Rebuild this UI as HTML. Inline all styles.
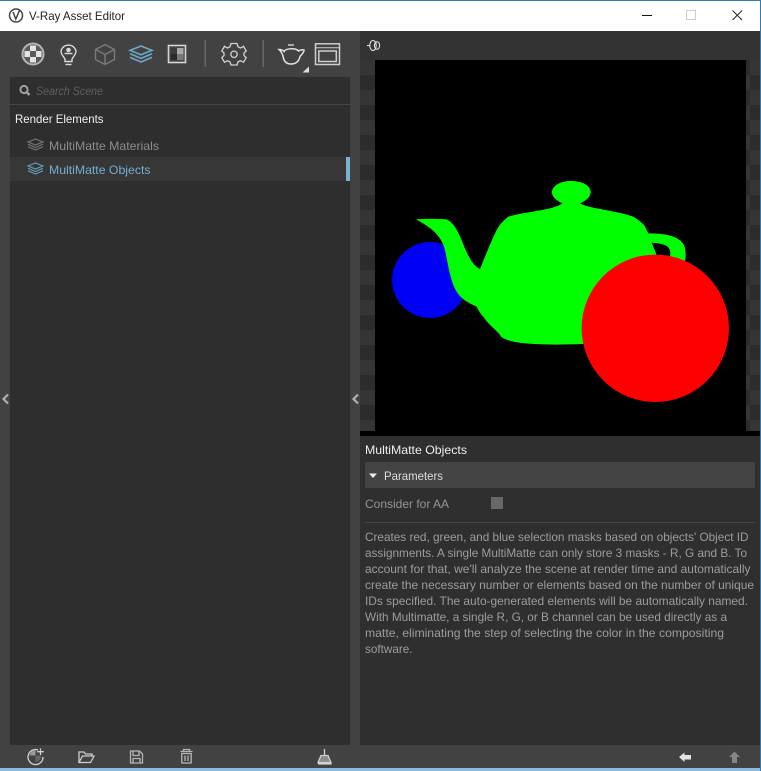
<!DOCTYPE html>
<html><head><meta charset="utf-8"><title>V-Ray Asset Editor</title>
<style>
html,body{margin:0;padding:0;width:761px;height:771px;overflow:hidden;background:#424242}
svg{display:block}
text{font-family:"Liberation Sans",sans-serif;font-size:12px}
</style></head><body>
<svg width="761" height="771" viewBox="0 0 761 771" xmlns="http://www.w3.org/2000/svg">
<defs>
<pattern id="chk" x="360" y="60" width="30" height="30" patternUnits="userSpaceOnUse">
<rect width="30" height="30" fill="#353535"/>
<rect x="0" y="15" width="15" height="15" fill="#2c2c2c"/>
<rect x="15" y="0" width="15" height="15" fill="#2c2c2c"/>
</pattern>
<g id="layers" fill="none" stroke-width="1.1">
<path d="M0-5.5 7.5-2.5 0 .5-7.5-2.5Z"/>
<path d="M-7.5-.2 0 3 7.5-.2"/>
<path d="M-7.5 2.3 0 5.5 7.5 2.3"/>
</g>
</defs>

<!-- base -->
<rect width="761" height="771" fill="#424242"/>
<!-- title bar -->
<rect width="761" height="31" fill="#fff"/>
<rect width="761" height="1" fill="#2b7cba"/>
<circle cx="16" cy="15.500" r="6.500" fill="none" stroke="#444" stroke-width="1.500"/>
<path d="M13 12 15.800 19 19.500 10.500" fill="none" stroke="#444" stroke-width="1.500"/>
<text x="29" y="20" fill="#222" textLength="96" lengthAdjust="spacingAndGlyphs">V-Ray Asset Editor</text>
<rect x="642" y="15" width="10" height="1" fill="#111"/>
<rect x="686.500" y="10.500" width="9" height="9" fill="none" stroke="#ccc"/>
<path d="M732.500 10.500 742 20M742 10.500 732.500 20" stroke="#222" stroke-width="1" fill="none"/>

<!-- top toolbar icons -->
<!-- material ball -->
<g>
<circle cx="33" cy="54" r="10.500" fill="#5a5a5a" stroke="#b4b4b4" stroke-width="2"/>
<path d="M30 45.500h6v5.500h-6zM30 57h6v5.500h-6zM24.500 51h5.500v6h-5.500zM36 51h5.500v6h-5.500z" fill="#e4e4e4"/>
</g>
<!-- bulb -->
<g fill="none" stroke="#d8d8d8" stroke-width="1.400">
<path d="M65 61.500V59.500C65 57.500 61 55.500 61 51A7.700 7.700 0 0 1 76 51C76 55.500 72 57.500 72 59.500V61.500Z"/>
<path d="M65.500 64.500H71.500"/>
<path d="M64.500 53.500H72.500"/>
<circle cx="68.500" cy="50" r="1.600" fill="#d8d8d8"/>
</g>
<!-- cube -->
<g fill="none" stroke="#7b7b7b" stroke-width="1.400">
<path d="M105 44.500 114.500 49.500V59.500L105 64.500 95.500 59.500V49.500Z"/>
<path d="M95.500 49.500 105 54.500 114.500 49.500M105 54.500V64.500"/>
</g>
<!-- layers active -->
<g transform="translate(141 54) scale(1.450)" stroke="#6fa9c8"><use href="#layers"/></g>
<!-- texture square -->
<rect x="168.500" y="45.500" width="17" height="17" fill="#444" stroke="#d6d6d6" stroke-width="1.600"/>
<rect x="171" y="54" width="6" height="6" fill="#2a2a2a"/>
<rect x="171" y="48" width="6" height="6" fill="#3c3c3c"/>
<rect x="177" y="48" width="6.500" height="6" fill="#aaa"/>
<rect x="177" y="54" width="6.500" height="6" fill="#7a7a7a"/>
<!-- separators -->
<rect x="204.500" y="40" width="1.500" height="27" fill="#676767"/>
<rect x="262.500" y="40" width="1.500" height="27" fill="#676767"/>
<!-- gear -->
<g fill="none" stroke="#d2d2d2" stroke-width="1.300">
<path d="M231 43.500H237L238 46.800 240.600 48 243.500 46.300 246.200 51 244 53 244 55.600 246.200 57.600 243.500 62.300 240.600 60.700 238 61.900 237 65H231L230 61.900 227.400 60.700 224.500 62.300 221.800 57.600 224 55.600 224 53 221.800 51 224.500 46.300 227.400 48 230 46.800Z"/>
<circle cx="234" cy="54.300" r="3.200"/>
</g>
<!-- teapot icon -->
<g fill="none" stroke="#e2e2e2" stroke-width="1.500">
<path d="M279 49.500C281 49.500 283 50.500 284 51.500 286 48 296 48 298.500 51 300 50 302 49.500 304 50 304 53 301 55 300 56.500 299 61 296 64 291 64 285.500 64 283.500 60 283 56 282 53 280.500 51 279 49.500Z"/>
<path d="M288 45H294" stroke-width="1.300"/>
</g>
<path d="M309 66.500V72.500H302.500Z" fill="#ddd"/>
<!-- window icon -->
<g fill="none" stroke="#cfcfcf" stroke-width="1.500">
<rect x="315.500" y="43.800" width="24" height="20.700"/>
<path d="M316 47.800H339" stroke-width="1"/>
<rect x="318.800" y="51" width="17.500" height="10.500"/>
</g>

<!-- left list -->
<rect x="10" y="77" width="340" height="668" fill="#2e2e2e"/>
<rect x="10" y="104" width="340" height="1" fill="#454545"/>
<circle cx="24" cy="89.500" r="3.600" fill="none" stroke="#a0a0a0" stroke-width="2"/>
<path d="M26.500 92 29.500 95" stroke="#a0a0a0" stroke-width="2.400"/>
<text x="36" y="95" fill="#5f5f5f" font-style="italic" textLength="67" lengthAdjust="spacingAndGlyphs">Search Scene</text>
<text x="15" y="123" fill="#f0f0f0" textLength="88.500" lengthAdjust="spacingAndGlyphs">Render Elements</text>
<g transform="translate(35.500 144.500)" stroke="#777"><use href="#layers"/></g>
<text x="49" y="150" fill="#8d8d8d" textLength="110" lengthAdjust="spacingAndGlyphs">MultiMatte Materials</text>
<rect x="10" y="157" width="340" height="24" fill="#373737"/>
<rect x="346" y="157" width="4" height="24" fill="#79b3cf"/>
<g transform="translate(35.500 168.500)" stroke="#6a9db8"><use href="#layers"/></g>
<text x="49" y="174" fill="#75afd0" textLength="101.500" lengthAdjust="spacingAndGlyphs">MultiMatte Objects</text>

<!-- collapse chevrons -->
<path d="M8 394.500 3.500 399 8 403.500" fill="none" stroke="#b0b0b0" stroke-width="2.200"/>
<path d="M358 394.500 353.500 399 358 403.500" fill="none" stroke="#b0b0b0" stroke-width="2.200"/>

<!-- right panel -->
<rect x="360" y="31" width="400" height="29" fill="#333"/>
<rect x="360" y="60" width="400" height="371" fill="url(#chk)"/>
<g fill="none" stroke="#ddd" stroke-width="1.100">
<path d="M367 45.500H370"/>
<ellipse cx="373" cy="45.500" rx="3.200" ry="5"/>
<ellipse cx="377" cy="45.500" rx="2.600" ry="3.800"/>
</g>

<!-- render -->
<rect x="375" y="60" width="371" height="375" fill="#000"/>
<rect x="360" y="431" width="400" height="5" fill="#000"/>
<circle cx="430" cy="280" r="38" fill="#0000f4"/>
<g transform="translate(380 170) scale(.33333)">
<path fill="#00ff00" d="M108 148C140 146 175 146 200 148 235 165 245 220 268 262 277 280 290 292 300 297 315 260 335 210 350 180 358 165 370 152 385 140 430 125 515 122 548 100 525 90 515 78 516 65 518 45 545 33 572 33 605 33 630 45 632 65 632 80 620 92 600 100 625 115 710 122 760 140 775 150 790 160 795 170L805 190C850 190 895 195 912 225 918 240 918 260 915 275L700 520C660 525 640 522 610 522 530 525 450 525 400 515 380 510 365 505 360 495 350 480 330 470 310 440 300 430 295 420 290 410 255 395 235 380 222 350 210 320 205 290 198 255 190 205 165 178 108 148Z"/>
<path fill="#000" d="M815 218C835 220 855 222 865 232 872 240 872 250 870 258L830 255Z"/>
</g>
<circle cx="655.300" cy="328.300" r="73.700" fill="#ff0000"/>

<!-- properties -->
<rect x="360" y="436" width="400" height="309" fill="#2f2f2f"/>
<text x="365" y="454" fill="#eee" textLength="102" lengthAdjust="spacingAndGlyphs">MultiMatte Objects</text>
<rect x="365" y="462" width="390" height="26" fill="#444"/>
<path d="M369 473.500H377L373 478Z" fill="#eee"/>
<text x="384" y="480" fill="#ddd" textLength="59" lengthAdjust="spacingAndGlyphs">Parameters</text>
<text x="365" y="508" fill="#959595" textLength="84" lengthAdjust="spacingAndGlyphs">Consider for AA</text>
<rect x="491" y="497" width="12" height="12" fill="#686868"/>
<rect x="365" y="522" width="390" height="1" fill="#464646"/>
<g fill="#9d9d9d">
<text x="365" y="541" textLength="383.500" lengthAdjust="spacingAndGlyphs">Creates red, green, and blue selection masks based on objects' Object ID</text>
<text x="365" y="557" textLength="382" lengthAdjust="spacingAndGlyphs">assignments. A single MultiMatte can only store 3 masks - R, G and B. To</text>
<text x="365" y="573" textLength="385.500" lengthAdjust="spacingAndGlyphs">account for that, we'll analyze the scene at render time and automatically</text>
<text x="365" y="589" textLength="389" lengthAdjust="spacingAndGlyphs">create the necessary number or elements based on the number of unique</text>
<text x="365" y="605" textLength="383" lengthAdjust="spacingAndGlyphs">IDs specified. The auto-generated elements will be automatically named.</text>
<text x="365" y="621" textLength="362" lengthAdjust="spacingAndGlyphs">With Multimatte, a single R, G, or B channel can be used directly as a</text>
<text x="365" y="637" textLength="359" lengthAdjust="spacingAndGlyphs">matte, eliminating the step of selecting the color in the compositing</text>
<text x="365" y="653" textLength="47.500" lengthAdjust="spacingAndGlyphs">software.</text>
</g>

<!-- bottom bar -->
<rect x="0" y="745" width="761" height="23" fill="#424242"/>
<rect x="0" y="768" width="761" height="3" fill="#8ab9dd"/>
<rect x="760" y="0" width="1" height="771" fill="#2b7cba"/>
<!-- new -->
<g fill="none" stroke="#d0d0d0" stroke-width="1.300">
<path d="M38 750A7.500 7.500 0 1 0 43 757"/>
<path d="M40.500 748.500V755M37.200 751.700H43.800"/>
</g>
<path d="M29.500 755.500H35.500V750.500A6 6 0 0 0 29.500 755.500Z" fill="#999"/>
<path d="M35.500 755.500H41A6 6 0 0 1 35.500 762Z" fill="#666"/>
<!-- folder -->
<g fill="none" stroke="#cdcdcd" stroke-width="1.300">
<path d="M79 762.500V752H84L85.500 754H92V756"/>
<path d="M79 762.500H90.500L94 756H82.500Z"/>
</g>
<!-- save -->
<g fill="none" stroke="#b5b5b5" stroke-width="1.300">
<path d="M130.500 751H139.500L142.500 754V763H130.500Z"/>
<path d="M133 751V755.500H139V751M133 763V758.500H140V763"/>
</g>
<!-- trash -->
<g fill="none" stroke="#b5b5b5" stroke-width="1.300">
<path d="M180.500 751.500H192.500M183.500 751V749.500H189.500V751"/>
<path d="M181.800 753.500H191.200V763H181.800Z"/>
<path d="M185 755.500V761M188 755.500V761"/>
</g>
<!-- broom -->
<g fill="none" stroke="#d0d0d0" stroke-width="1.300">
<path d="M324.500 749V755"/>
<path d="M321 755.500H328L331 762.500H318Z" fill="#8a8a8a"/>
<path d="M318 763.800H331.500" stroke-width="1.600"/>
</g>
<!-- arrows -->
<path d="M679 757 684.500 752.500V755H691V759.500H684.500V762Z" fill="#e4e4e4"/>
<path d="M734.500 751.500 740 757H737V763H732V757H729Z" fill="#858585"/>
</svg>
</body></html>
